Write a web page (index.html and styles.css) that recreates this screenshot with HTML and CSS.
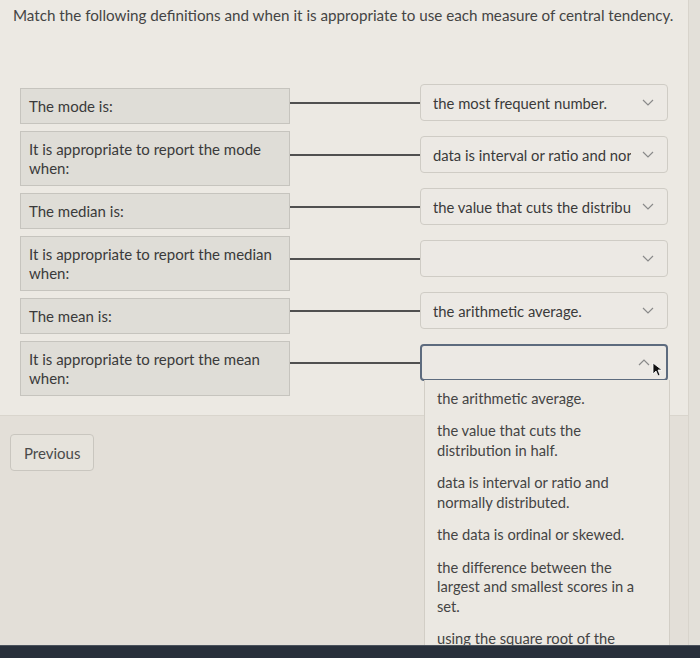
FILE: index.html
```html
<!DOCTYPE html>
<html lang="en">
<head>
  <meta charset="UTF-8">
  <title>Matching Question</title>
  <link rel="stylesheet" href="styles.css">
</head>
<body>

<div class="screen">
  <div class="page">
    <div class="question">
      <p class="prompt">Match the following definitions and when it is appropriate to use each measure of central tendency.</p>
      <div class="match">
        <div class="terms">
          <div class="term">The mode is:</div>
          <div class="term">It is appropriate to report the mode when:</div>
          <div class="term">The median is:</div>
          <div class="term">It is appropriate to report the median when:</div>
          <div class="term">The mean is:</div>
          <div class="term">It is appropriate to report the mean when:</div>
        </div>
        <div class="answers">
          <div class="answer">
            <span class="link"></span>
            <div class="select">
              <span class="value">the most frequent number.</span>
              <svg class="chevron" viewBox="0 0 12 7"><path d="M1 1l5 5 5-5"/></svg>
            </div>
          </div>
          <div class="answer">
            <span class="link"></span>
            <div class="select">
              <span class="value">data is interval or ratio and normally distributed.</span>
              <svg class="chevron" viewBox="0 0 12 7"><path d="M1 1l5 5 5-5"/></svg>
            </div>
          </div>
          <div class="answer">
            <span class="link"></span>
            <div class="select">
              <span class="value">the value that cuts the distribution in half.</span>
              <svg class="chevron" viewBox="0 0 12 7"><path d="M1 1l5 5 5-5"/></svg>
            </div>
          </div>
          <div class="answer">
            <span class="link"></span>
            <div class="select">
              <span class="value"></span>
              <svg class="chevron" viewBox="0 0 12 7"><path d="M1 1l5 5 5-5"/></svg>
            </div>
          </div>
          <div class="answer">
            <span class="link"></span>
            <div class="select">
              <span class="value">the arithmetic average.</span>
              <svg class="chevron" viewBox="0 0 12 7"><path d="M1 1l5 5 5-5"/></svg>
            </div>
          </div>
          <div class="answer">
            <span class="link"></span>
            <div class="select open">
              <span class="value"></span>
              <svg class="chevron" viewBox="0 0 12 7"><path d="M1 6l5-5 5 5"/></svg>
              <svg class="cursor" viewBox="0 0 10 15"><path d="M1 1v11l3-3 2 5 2-1-2-5h4z"/></svg>
              <ul class="options">
                <li>the arithmetic average.</li>
                <li>the value that cuts the distribution in half.</li>
                <li>data is interval or ratio and normally distributed.</li>
                <li>the data is ordinal or skewed.</li>
                <li>the difference between the largest and smallest scores in a set.</li>
                <li>using the square root of the variance.</li>
              </ul>
            </div>
          </div>
        </div>
      </div>
    </div>
    <div class="footer">
      <button class="prev-btn">Previous</button>
    </div>
  </div>
  <div class="edge"></div>
</div>
<div class="bezel"></div>

</body>
</html>
```

FILE: styles.css
```css
body {
  margin: 0;
  font-family: Lato, "Open Sans", sans-serif;
  background-color: #ebe8e2;
  color: #3d3d3d;
}
.screen {
  display: flex;
  height: 645px;
  overflow: hidden;
}
.page {
  flex: 1;
  display: flex;
  flex-direction: column;
  background-color: #ece9e3;
}
.edge {
  width: 11px;
  background-color: #e3e0d9;
  border-left: 1px solid #d8d4cc;
}
.question {
  padding: 5px 0 19px;
}
.prompt {
  margin: 0 0 0 13px;
  font-size: 15.2px;
  line-height: 20px;
  color: #444;
}
.match {
  display: flex;
  margin-top: 59px;
}
.terms {
  display: flex;
  flex-direction: column;
  gap: 7px;
  width: 270px;
  margin-left: 20px;
  padding-top: 4px;
}
.term {
  padding: 7.5px 8px;
  font-size: 15px;
  line-height: 19px;
  background-color: #dfddd7;
  border: 1px solid #c6c4be;
  color: #3a3a3a;
}
.answers {
  display: flex;
  flex-direction: column;
  gap: 15px;
}
.answer {
  display: flex;
  align-items: center;
}
.link {
  width: 130px;
  height: 2px;
  background-color: #505050;
}
.select {
  position: relative;
  display: flex;
  align-items: center;
  box-sizing: border-box;
  width: 248px;
  height: 37px;
  padding: 0 36px 0 12px;
  background-color: #ece9e4;
  border: 1px solid #cfccc5;
  border-radius: 4px;
}
.select .value {
  flex: 1;
  overflow: hidden;
  white-space: nowrap;
  font-size: 14.8px;
  color: #3a3a3a;
}
.chevron {
  position: absolute;
  right: 13px;
  top: 14px;
  width: 12px;
  height: 7px;
  fill: none;
  stroke: #8a8a8a;
  stroke-width: 1.2;
}
.select.open {
  border: 2px solid #5d6b7e;
}
.select.open .chevron {
  top: 13px;
  right: 16px;
}
.cursor {
  position: absolute;
  right: 4px;
  top: 16px;
  width: 10px;
  height: 15px;
  fill: #111;
  stroke: #fff;
  stroke-width: 0.8;
}
.options {
  position: absolute;
  top: 100%;
  left: 2px;
  width: 246px;
  margin: 1px 0 0;
  padding: 2px 0 40px;
  list-style: none;
  box-sizing: border-box;
  background-color: #ebe8e2;
  border: 1px solid #d2cec6;
  border-top: none;
}
.options li {
  padding: 6.5px 24px 6.5px 12px;
  font-size: 14.7px;
  line-height: 19.5px;
  color: #444;
}
.footer {
  flex: 1;
  padding: 18px 10px;
  background-color: #e3dfd8;
  border-top: 1px solid #d9d5cd;
}
.prev-btn {
  height: 37px;
  padding: 0 13px;
  font-family: Lato, "Open Sans", sans-serif;
  font-size: 15px;
  color: #4a4a4a;
  background-color: #e6e3dc;
  border: 1px solid #c9c6bf;
  border-radius: 4px;
}
.bezel {
  height: 13px;
  background-color: #28303b;
  border-top: 1px solid #4a525c;
}
```
